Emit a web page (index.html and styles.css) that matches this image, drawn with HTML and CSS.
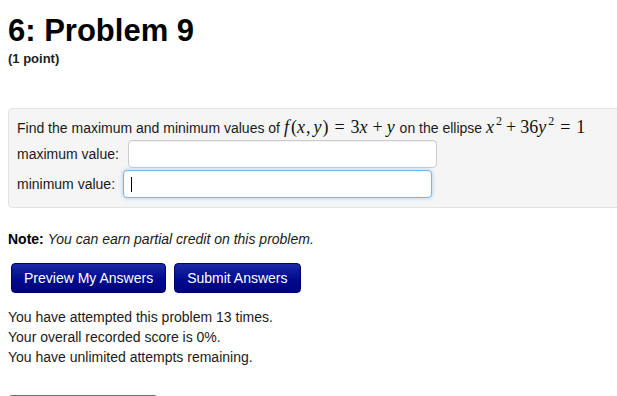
FILE: index.html
```html
<!DOCTYPE html>
<html>
<head>
<meta charset="utf-8">
<link rel="stylesheet" href="styles.css">
</head>
<body>
<div class="page">
  <h1 class="title">6: Problem 9</h1>
  <div class="points">(1 point)</div>

  <div class="problem">
    <div class="line1">Find the maximum and minimum values of <span class="math"><i>f</i><span class="ic"></span>(<i>x</i>,<span class="thin"></span><i>y</i>)<span class="rel">=</span>3<i>x</i><span class="bin">+</span><i>y</i></span> on the ellipse <span class="math"><i>x</i><sup>2</sup><span class="bin">+</span>36<i>y</i><sup>2</sup><span class="rel">=</span>1</span></div>
    <div class="answer-row">
      <span class="label">maximum value:</span>
      <input class="ans" type="text">
    </div>
    <div class="answer-row">
      <span class="label">minimum value:</span>
      <span class="field"><input class="ans focused" type="text"><span class="caret"></span></span>
    </div>
  </div>

  <div class="note"><b>Note:</b> <i>You can earn partial credit on this problem.</i></div>

  <div class="buttons">
    <button class="btn">Preview My Answers</button>
    <button class="btn">Submit Answers</button>
  </div>

  <div class="status">
    <div>You have attempted this problem 13 times.</div>
    <div>Your overall recorded score is 0%.</div>
    <div>You have unlimited attempts remaining.</div>
  </div>

  <div class="next"></div>
</div>
</body>
</html>
```
FILE: styles.css
```css
html, body {
  margin: 0;
  padding: 0;
  background: #ffffff;
  overflow: hidden;
}

body {
  font-family: "Liberation Sans", Arial, Helvetica, sans-serif;
  font-size: 14px;
  color: #1a1a1a;
}

.page {
  padding-left: 8px;
}

.title {
  margin: 13px 0 0 0;
  font-size: 31px;
  line-height: 36px;
  font-weight: bold;
  color: #000;
}

.points {
  margin-top: 2px;
  font-size: 13px;
  line-height: 16px;
  font-weight: bold;
  color: #222;
}

.problem {
  margin-top: 41px;
  width: 700px;
  background: #f5f5f5;
  border: 1px solid #e3e3e3;
  border-radius: 4px;
  padding: 9px 8px;
}

.line1 {
  height: 20px;
  line-height: 20px;
  white-space: nowrap;
}

.math {
  font-family: "Liberation Serif", "Times New Roman", serif;
  font-size: 18px;
  line-height: 1;
  color: #111;
}

.math i {
  letter-spacing: 1px;
}

.math sup {
  font-size: 12px;
  line-height: 0;
  vertical-align: 8px;
  margin-left: 1px;
}

.ic {
  display: inline-block;
  width: 1px;
}

.thin {
  display: inline-block;
  width: 3px;
}

.rel {
  margin: 0 6px;
}

.bin {
  margin: 0 4px;
}

.answer-row {
  margin-top: 2px;
  height: 28px;
  display: flex;
  align-items: center;
}

.label {
  margin-right: 9px;
}

.answer-row:last-child .label {
  margin-right: 8px;
}

.field {
  position: relative;
  display: inline-block;
  height: 28px;
}

.ans {
  box-sizing: border-box;
  width: 309px;
  height: 28px;
  margin: 0;
  padding: 4px 6px;
  border: 1px solid #cccccc;
  border-radius: 4px;
  background: #ffffff;
  box-shadow: inset 0 1px 1px rgba(0, 0, 0, 0.06);
  outline: none;
  font-family: "Liberation Sans", Arial, sans-serif;
  font-size: 14px;
}

.ans.focused {
  border-color: #7fb5e6;
  box-shadow: inset 0 1px 1px rgba(0, 0, 0, 0.05), 0 0 4px rgba(102, 175, 233, 0.6);
}

.caret {
  position: absolute;
  left: 8px;
  top: 7px;
  width: 1px;
  height: 15px;
  background: #000;
}

.note {
  margin-top: 21px;
  line-height: 20px;
}

.note b {
  color: #000;
}

.buttons {
  margin-top: 14px;
  margin-left: 3px;
  display: flex;
  gap: 8px;
}

.btn {
  box-sizing: border-box;
  height: 30px;
  padding: 0 12px;
  border: 1px solid #00006e;
  border-radius: 4px;
  background: linear-gradient(#1a2aa3, #000a8e 55%, #00047c);
  color: #ffffff;
  font-family: "Liberation Sans", Arial, sans-serif;
  font-size: 14px;
  line-height: 28px;
  cursor: pointer;
}

.status {
  margin-top: 14px;
  line-height: 20px;
}

.next {
  margin-top: 28px;
  margin-left: 1px;
  width: 148px;
  height: 30px;
  border-radius: 3px 3px 0 0;
  background: #5a6ea8;
}
```
